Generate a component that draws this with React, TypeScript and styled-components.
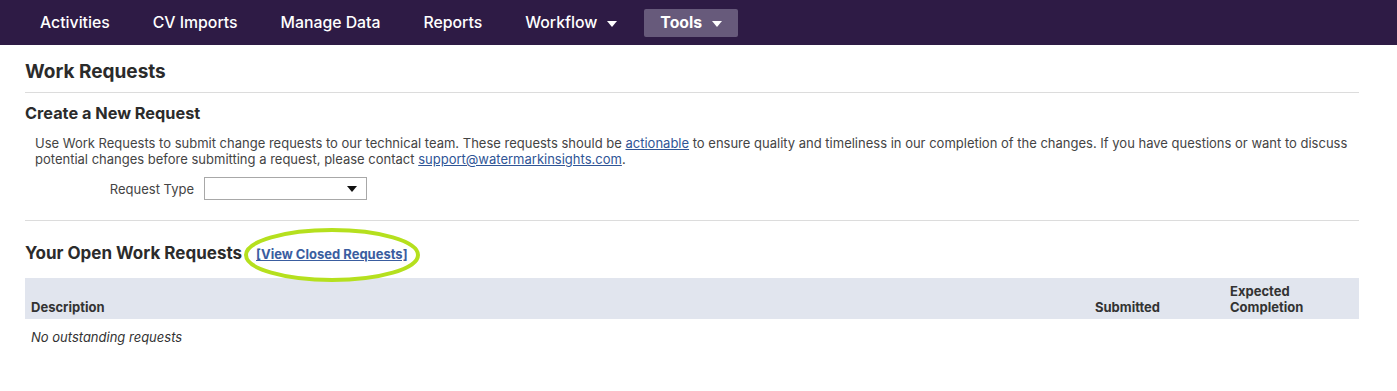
import React from "react";
import styled, { createGlobalStyle } from "styled-components";

const Global = createGlobalStyle`
  html, body { margin: 0; padding: 0; background: #fff; }
  body { font-family: Inter, "Noto Sans", sans-serif; color: #333; }
`;

const NavBar = styled.nav`
  height: 45px;
  background: #2e1b45;
  display: flex;
  align-items: center;
  padding-left: 24px;
  gap: 11px;
`;

const NavItem = styled.a<{ $active?: boolean }>`
  display: flex;
  align-items: center;
  gap: 10px;
  height: 28px;
  padding: 0 16px;
  font-size: 15.8px;
  font-weight: ${(p) => (p.$active ? 700 : 500)};
  color: #fff;
  background: ${(p) => (p.$active ? "#675a7b" : "transparent")};
  border-radius: 2px;
  text-decoration: none;
`;

const Caret = styled.span`
  width: 0;
  height: 0;
  border-left: 5px solid transparent;
  border-right: 5px solid transparent;
  border-top: 6px solid #fff;
  margin-top: 2px;
`;

const Page = styled.main`
  padding: 0 38px 0 25px;
`;

const Title = styled.h1`
  margin: 0;
  padding: 15px 0 9px;
  font-size: 19px;
  line-height: 23px;
  font-weight: 700;
  color: #2b2b2b;
  border-bottom: 1px solid #dcdcdc;
`;

const Section = styled.section<{ $border?: boolean }>`
  border-bottom: ${(p) => (p.$border ? "1px solid #dcdcdc" : "none")};
  padding-bottom: ${(p) => (p.$border ? 20 : 0)}px;
`;

const SubTitle = styled.h2`
  margin: 0;
  padding-top: 10px;
  font-size: 16.3px;
  font-weight: 700;
  color: #2b2b2b;
  display: flex;
  align-items: center;
`;

const Para = styled.p`
  margin: 12px 0 0;
  padding-left: 10px;
  font-size: 13px;
  line-height: 16px;
  color: #444;
`;

const Link = styled.a`
  color: #2f5596;
  text-decoration: underline;
`;

const FormRow = styled.div`
  display: flex;
  align-items: center;
  margin-top: 10px;
`;

const Label = styled.label`
  width: 169px;
  text-align: right;
  font-size: 13px;
  color: #444;
  padding-right: 10px;
`;

const Select = styled.div`
  border: 1px solid #a8a8a8;
  background: #fff;
  display: flex;
  align-items: center;
  justify-content: flex-end;
  padding-right: 9px;
  box-sizing: border-box;
  width: 163px;
  height: 23px;
`;

const SelCaret = styled.span`
  width: 0;
  height: 0;
  border-left: 5px solid transparent;
  border-right: 5px solid transparent;
  border-top: 6px solid #111;
`;

const OpenTitle = styled(SubTitle)`
  padding-top: 22px;
  font-size: 17px;
  gap: 14px;
`;

const Circled = styled.span`
  position: relative;
  display: inline-block;
`;

const ClosedLink = styled.a`
  font-size: 13px;
  font-weight: 700;
  color: #3a5da0;
  text-decoration: underline;
`;

const Ellipse = styled.svg`
  position: absolute;
  left: -13px;
  top: -16px;
  pointer-events: none;
`;

const Table = styled.table`
  width: 100%;
  border-collapse: collapse;
  margin-top: 15px;
`;

const Th = styled.th<{ $w?: number }>`
  background: #e1e5ee;
  text-align: left;
  vertical-align: bottom;
  font-size: 13px;
  font-weight: 700;
  color: #333;
  padding: 5px 6px 4px;
  line-height: 16px;
  box-sizing: border-box;
  height: 39px;
  width: ${(p) => (p.$w ? `${p.$w + 12}px` : "auto")};
`;

const Td = styled.td`
  font-size: 13px;
  font-style: italic;
  color: #333;
  padding: 10px 6px;
`;

export default function App() {
  return (
    <>
      <Global />
      <NavBar>
        <NavItem>Activities</NavItem>
        <NavItem>CV Imports</NavItem>
        <NavItem>Manage Data</NavItem>
        <NavItem>Reports</NavItem>
        <NavItem>
          Workflow <Caret />
        </NavItem>
        <NavItem $active>
          Tools <Caret />
        </NavItem>
      </NavBar>
      <Page>
        <Title>Work Requests</Title>
        <Section $border>
          <SubTitle>Create a New Request</SubTitle>
          <Para>
            Use Work Requests to submit change requests to our technical team. These requests should be{" "}
            <Link>actionable</Link> to ensure quality and timeliness in our completion of the changes. If you have
            questions or want to discuss potential changes before submitting a request, please contact{" "}
            <Link>support@watermarkinsights.com</Link>.
          </Para>
          <FormRow>
            <Label>Request Type</Label>
            <Select>
              <SelCaret />
            </Select>
          </FormRow>
        </Section>
        <Section>
          <OpenTitle>
            Your Open Work Requests
            <Circled>
              <ClosedLink>[View Closed Requests]</ClosedLink>
              <Ellipse width="178" height="56" viewBox="0 0 178 56">
                <ellipse cx="89" cy="28" rx="86" ry="25" fill="none" stroke="#b5e01e" strokeWidth="4" />
              </Ellipse>
            </Circled>
          </OpenTitle>
          <Table>
            <thead>
              <tr>
                <Th>Description</Th>
                <Th $w={123}>Submitted</Th>
                <Th $w={123}>Expected Completion</Th>
              </tr>
            </thead>
            <tbody>
              <tr>
                <Td colSpan={3}>No outstanding requests</Td>
              </tr>
            </tbody>
          </Table>
        </Section>
      </Page>
    </>
  );
}
